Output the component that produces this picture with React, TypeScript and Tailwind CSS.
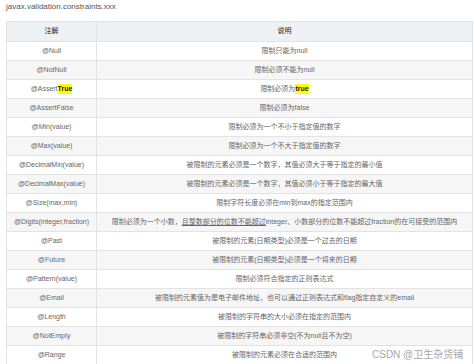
const rows: { name: React.ReactNode; desc: React.ReactNode }[] = [
  { name: '@Null', desc: '限制只能为null' },
  { name: '@NotNull', desc: '限制必须不能为null' },
  {
    name: (
      <>
        @Assert<span className="bg-[#ffff00] font-bold text-[#222]">True</span>
      </>
    ),
    desc: (
      <>
        限制必须为<span className="bg-[#ffff00] font-bold text-[#222]">true</span>
      </>
    ),
  },
  { name: '@AssertFalse', desc: '限制必须为false' },
  { name: '@Min(value)', desc: '限制必须为一个不小于指定值的数字' },
  { name: '@Max(value)', desc: '限制必须为一个不大于指定值的数字' },
  { name: '@DecimalMin(value)', desc: '被限制的元素必须是一个数字，其值必须大于等于指定的最小值' },
  { name: '@DecimalMax(value)', desc: '被限制的元素必须是一个数字，其值必须小于等于指定的最大值' },
  { name: '@Size(max,min)', desc: '限制字符长度必须在min到max的指定范围内' },
  {
    name: '@Digits(integer,fraction)',
    desc: (
      <>
        限制必须为一个小数，<span className="underline">且整数部分的位数不能超过</span>integer、小数部分的位数不能超过fraction的在可接受的范围内
      </>
    ),
  },
  { name: '@Past', desc: '被限制的元素(日期类型)必须是一个过去的日期' },
  { name: '@Future', desc: '被限制的元素(日期类型)必须是一个将来的日期' },
  { name: '@Pattern(value)', desc: '限制必须符合指定的正则表达式' },
  { name: '@Email', desc: '被限制的元素值为是电子邮件地址，也可以通过正则表达式和flag指定自定义的email' },
  { name: '@Length', desc: '被限制的字符串的大小必须在指定的范围内' },
  { name: '@NotEmpty', desc: '被限制的字符串必须非空(不为null且不为空)' },
  { name: '@Range', desc: '被限制的元素必须在合适的范围内' },
];

export default function App() {
  return (
    <div
      className="relative w-[474px] h-[364px] overflow-hidden bg-white"
      style={{ fontFamily: '"Liberation Sans", "Noto Sans CJK SC", sans-serif' }}
    >
      <div className="h-[21px] pl-[6px] text-[8px] leading-[13px] text-[#555]">
        javax.validation.constraints.xxx
      </div>

      <div className="ml-[6px] w-[467px] border-l border-r border-t border-[#e3e3e3] text-[7px] text-[#666]">
        {/* 表头 */}
        <div className="flex h-[20px] border-b border-[#e3e3e3] bg-[#eef1f4] text-[#444]">
          <div className="flex w-[90px] items-center justify-center border-r border-[#e3e3e3] font-medium">注解</div>
          <div className="flex flex-1 items-center justify-center font-medium">说明</div>
        </div>

        {rows.map((r, i) => (
          <div
            key={i}
            className={`flex h-[19px] border-b border-[#e3e3e3] ${i % 2 === 1 ? 'bg-[#f6f6f6]' : 'bg-white'}`}
          >
            <div className="flex w-[90px] items-center justify-center whitespace-nowrap border-r border-[#e3e3e3]">
              {r.name}
            </div>
            <div className="flex flex-1 items-center justify-center whitespace-nowrap">{r.desc}</div>
          </div>
        ))}
      </div>

      {/* 水印 */}
      <div className="absolute left-[372px] top-[348px] text-[10px] leading-[14px] text-[#a8a8a8]">
        CSDN @卫生杂货铺
      </div>
    </div>
  );
}
